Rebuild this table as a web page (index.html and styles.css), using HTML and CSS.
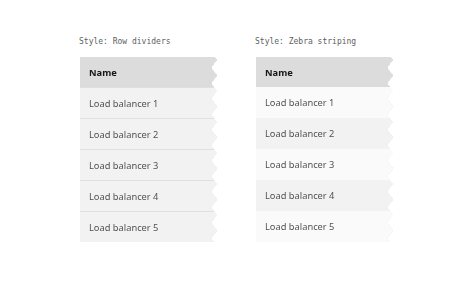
FILE: index.html
```html
<!DOCTYPE html>
<html lang="en">
<head>
<meta charset="utf-8">
<title>Table styles</title>
<link rel="stylesheet" href="styles.css">
</head>
<body>
<div class="page">
  <section class="example">
    <div class="label">Style: Row dividers</div>
    <div class="torn">
      <div class="table dividers">
        <div class="head">Name</div>
        <div class="row">Load balancer 1</div>
        <div class="row">Load balancer 2</div>
        <div class="row">Load balancer 3</div>
        <div class="row">Load balancer 4</div>
        <div class="row">Load balancer 5</div>
      </div>
    </div>
  </section>
  <section class="example">
    <div class="label">Style: Zebra striping</div>
    <div class="torn">
      <div class="table zebra">
        <div class="head">Name</div>
        <div class="row">Load balancer 1</div>
        <div class="row">Load balancer 2</div>
        <div class="row">Load balancer 3</div>
        <div class="row">Load balancer 4</div>
        <div class="row">Load balancer 5</div>
      </div>
    </div>
  </section>
</div>
</body>
</html>
```
FILE: styles.css
```css
html, body {
  margin: 0;
  padding: 0;
  background: #ffffff;
}
.page {
  display: flex;
  gap: 39px;
  padding: 37px 0 0 80px;
}
.example {
  width: 137px;
  display: flex;
  flex-direction: column;
}
.label {
  font-family: "DejaVu Sans Mono", "Liberation Mono", monospace;
  font-size: 8px;
  line-height: 10px;
  color: #5e5e5e;
  margin-left: -1px;
  height: 11px;
  margin-bottom: 9px;
}
.torn {
  filter: drop-shadow(0 0 0.6px rgba(0, 0, 0, 0.18));
}
.table {
  font-family: "Noto Sans", "Open Sans", sans-serif;
  font-size: 9.3px;
  --tooth: 15.5px;
  -webkit-mask: conic-gradient(from -143.7deg at right, #0000, #000 1deg 106.4deg, #0000 107.4deg) 0 -4.75px / 100% var(--tooth) repeat-y;
  mask: conic-gradient(from -143.7deg at right, #0000, #000 1deg 106.4deg, #0000 107.4deg) 0 -4.75px / 100% var(--tooth) repeat-y;
}
.head {
  height: 30px;
  display: flex;
  align-items: center;
  padding-left: 9px;
  background: #dcdcdc;
  color: #161616;
  font-weight: 700;
}
.row {
  height: 30px;
  display: flex;
  align-items: center;
  padding-left: 9px;
  color: #525252;
}
.dividers .row {
  background: #f2f2f2;
  border-top: 1px solid #e0e0e0;
}
.zebra .row {
  height: 31px;
}
.zebra .row:nth-child(even) {
  background: #fafafa;
}
.zebra .row:nth-child(odd) {
  background: #f2f2f2;
}
```
